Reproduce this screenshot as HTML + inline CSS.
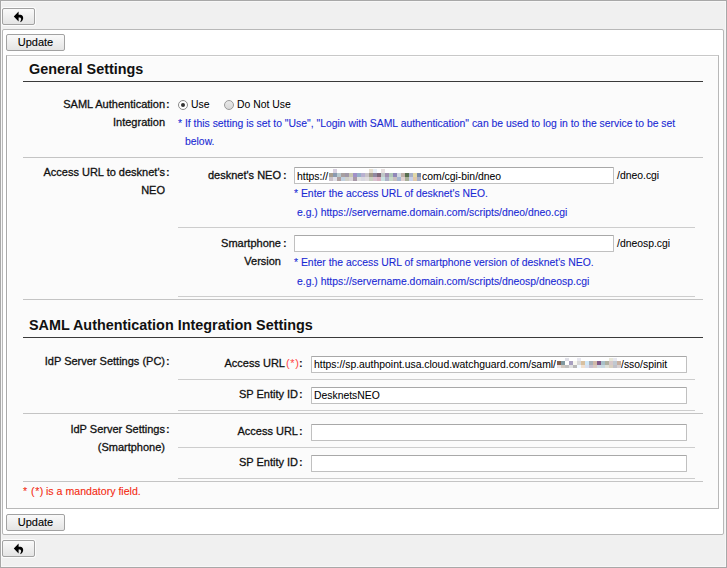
<!DOCTYPE html>
<html><head><meta charset="utf-8">
<style>
*{box-sizing:border-box}
html,body{margin:0;padding:0}
body{width:727px;height:568px;position:relative;overflow:hidden;background:#f0f0f0;font-family:"Liberation Sans",sans-serif;font-size:11px;color:#222}
.a{position:absolute}
.ln{position:absolute;height:1px;background:#c4c4c4}
.btn{position:absolute;border:1px solid #a2a2a2;border-radius:2px;background:linear-gradient(#fafafa,#e4e4e4);box-shadow:0 0 0 1px rgba(255,255,255,.8)}
.t{position:absolute;white-space:nowrap;line-height:13px;color:#111;-webkit-text-stroke-width:0.3px}
.r{text-align:right}
.blue{color:#1a2ad4!important;-webkit-text-stroke-width:0.1px!important;font-size:10.4px}
.s{font-size:10.4px;color:#000;-webkit-text-stroke-width:0.05px}
.red{font-size:10.6px!important;color:#f42a10!important;-webkit-text-stroke-width:0.1px!important}
.c{font-weight:bold;-webkit-text-stroke:0 !important}
.inp{position:absolute;border:1px solid #c0c0c0;border-top-color:#a8a8a8;border-radius:1px;background:#fff;height:17px}
.h{position:absolute;font-weight:bold;font-size:14.4px;color:#111;white-space:nowrap;line-height:16px}
.px{position:absolute;width:4px;height:4px}
</style></head><body>
<!-- outer frame -->
<div class="a" style="left:0;top:0;width:727px;height:1px;background:#a8a8a8"></div>
<div class="a" style="left:0;top:0;width:1px;height:568px;background:#a8a8a8"></div>
<div class="a" style="left:726px;top:0;width:1px;height:568px;background:#a8a8a8"></div>
<div class="a" style="left:1px;top:1px;width:725px;height:1px;background:#f7f7f7"></div>
<div class="a" style="left:1px;top:1px;width:1px;height:566px;background:#f7f7f7"></div>
<div class="a" style="left:725px;top:1px;width:1px;height:566px;background:#f7f7f7"></div>
<div class="a" style="left:1px;top:566px;width:725px;height:1px;background:#f7f7f7"></div>
<div class="a" style="left:0;top:567px;width:727px;height:1px;background:#a8a8a8"></div>

<!-- top back button -->
<div class="btn" style="left:2px;top:8px;width:33px;height:17px">
<svg width="31" height="15" style="position:absolute;left:0;top:0"><path d="M10.8 7.5 L15.6 2.6 L15.6 5.7 L17.6 5.7 C19.7 5.7 20.5 8 20.1 9.8 C19.8 11.2 18.9 12.5 17.6 13.3 L17.3 12.6 C17.9 11.6 18.3 10.6 18.1 9.8 C17.9 9 17.2 8.5 16.4 8.5 L15.6 8.5 L15.6 12.4 Z" fill="#000"/></svg>
</div>

<!-- panel -->
<div class="a" style="left:2px;top:29px;width:722px;height:506px;border:1px solid #b8b8b8;border-radius:2px;background:#fff"></div>

<div class="btn" style="left:6px;top:34px;width:59px;height:17px"><div class="t" style="left:0;width:57px;text-align:center;top:1px;color:#000;-webkit-text-stroke-width:0.1px">Update</div></div>

<!-- inner panel -->
<div class="a" style="left:6px;top:55px;width:713px;height:454px;border:1px solid #b8b8b8;border-top-color:#c8c8c8;border-left-color:#a8a8a8;background:#fbfbfb;box-shadow:inset 1px 1px 0 #fff"></div>

<!-- General Settings -->
<div class="h" style="left:29px;top:61px">General Settings</div>
<div class="ln" style="left:23px;top:81px;width:680px;background:#3a3a3a"></div>

<!-- Row 1 -->
<div class="t r" style="right:562px;top:98px">SAML Authentication</div>
<div class="t c" style="left:166px;top:98px">:</div>
<div class="t r" style="right:562px;top:116px">Integration</div>

<div class="a" style="left:178px;top:100px;width:10px;height:10px;border-radius:50%;border:1px solid #8a8a8a;background:#fff"><div class="a" style="left:2px;top:2px;width:4px;height:4px;border-radius:50%;background:#333"></div></div>
<div class="t s" style="left:191px;top:98px">Use</div>
<div class="a" style="left:224px;top:100px;width:10px;height:10px;border-radius:50%;border:1px solid #9a9a9a;background:linear-gradient(#e8e8e8,#d8d8d8)"></div>
<div class="t s" style="left:237px;top:98px">Do Not Use</div>
<div class="t blue" style="left:178px;top:117px">*&nbsp;If this setting is set to "Use", "Login with SAML authentication" can be used to log in to the service to be set</div>
<div class="t blue" style="left:185px;top:135px">below.</div>

<div class="ln" style="left:23px;top:157px;width:680px"></div>

<!-- Row 2 -->
<div class="t r" style="right:562px;top:166px">Access URL to desknet's</div>
<div class="t c" style="left:166px;top:166px">:</div>
<div class="t r" style="right:562px;top:184px">NEO</div>

<div class="t r" style="right:446px;top:169px">desknet's NEO</div>
<div class="t c" style="left:283px;top:169px">:</div>
<div class="inp" style="left:294px;top:167px;width:320px"></div>
<div class="t s" style="left:297px;top:170px">https://</div>
<div class="t s" style="left:422px;top:170px">com/cgi-bin/dneo</div>
<svg class="a" style="left:329px;top:169px;filter:blur(0.4px)" width="92" height="12"><rect x="0" y="4" width="4" height="4" fill="#a89e8e"/><rect x="4" y="4" width="4" height="4" fill="#8a9ab0"/><rect x="8" y="4" width="4" height="4" fill="#b8c8cc"/><rect x="12" y="4" width="4" height="4" fill="#a8a0a0"/><rect x="16" y="4" width="4" height="4" fill="#a098a8"/><rect x="20" y="4" width="4" height="4" fill="#c8c8b0"/><rect x="24" y="4" width="4" height="4" fill="#a090c8"/><rect x="28" y="4" width="4" height="4" fill="#98b0c8"/><rect x="32" y="4" width="4" height="4" fill="#b8b0d0"/><rect x="36" y="4" width="4" height="4" fill="#c8c4c8"/><rect x="40" y="4" width="4" height="4" fill="#a09888"/><rect x="44" y="4" width="4" height="4" fill="#9088a0"/><rect x="48" y="4" width="4" height="4" fill="#806878"/><rect x="52" y="4" width="4" height="4" fill="#c0c8c8"/><rect x="56" y="4" width="4" height="4" fill="#a090b0"/><rect x="60" y="4" width="4" height="4" fill="#b0c8b8"/><rect x="64" y="4" width="4" height="4" fill="#9088b8"/><rect x="68" y="4" width="4" height="4" fill="#d0d8e0"/><rect x="72" y="4" width="4" height="4" fill="#c0b0a8"/><rect x="76" y="4" width="4" height="4" fill="#587050"/><rect x="80" y="4" width="4" height="4" fill="#a8b0c8"/><rect x="84" y="4" width="4" height="4" fill="#e0d8a8"/><rect x="88" y="4" width="4" height="4" fill="#7888a8"/><rect x="0" y="8" width="4" height="4" fill="#c8c0c8"/><rect x="4" y="8" width="4" height="4" fill="#e0e0e8"/><rect x="8" y="8" width="4" height="4" fill="#b0a0a0"/><rect x="12" y="8" width="4" height="4" fill="#c0d0e0"/><rect x="16" y="8" width="4" height="4" fill="#d0d0c8"/><rect x="20" y="8" width="4" height="4" fill="#d8d4d8"/><rect x="24" y="8" width="4" height="4" fill="#a898a8"/><rect x="28" y="8" width="4" height="4" fill="#e0e0e0"/><rect x="32" y="8" width="4" height="4" fill="#d8d8e0"/><rect x="36" y="8" width="4" height="4" fill="#e0dce0"/><rect x="40" y="8" width="4" height="4" fill="#c8d0c0"/><rect x="44" y="8" width="4" height="4" fill="#d8c0d0"/><rect x="48" y="8" width="4" height="4" fill="#d8b0c0"/><rect x="52" y="8" width="4" height="4" fill="#c8e0e0"/><rect x="56" y="8" width="4" height="4" fill="#b0b0c8"/><rect x="60" y="8" width="4" height="4" fill="#c8d8c8"/><rect x="64" y="8" width="4" height="4" fill="#c8c0c0"/><rect x="68" y="8" width="4" height="4" fill="#a8b8d0"/><rect x="72" y="8" width="4" height="4" fill="#e0d0d0"/><rect x="76" y="8" width="4" height="4" fill="#a8b098"/><rect x="80" y="8" width="4" height="4" fill="#c8d0e8"/><rect x="84" y="8" width="4" height="4" fill="#e0c8a8"/><rect x="88" y="8" width="4" height="4" fill="#a8b0c8"/><rect x="40" y="0" width="4" height="4" fill="#e8e0d0"/><rect x="44" y="0" width="4" height="4" fill="#e8f0f8"/><rect x="52" y="0" width="4" height="4" fill="#e8e0e0"/><rect x="4" y="0" width="4" height="4" fill="#d8d0e0"/></svg>
<div class="t s" style="left:617px;top:169px">/dneo.cgi</div>
<div class="t blue" style="left:294px;top:187px">* Enter the access URL of desknet's NEO.</div>
<div class="t blue" style="left:297px;top:206px">e.g.) https://servername.domain.com/scripts/dneo/dneo.cgi</div>
<div class="ln" style="left:178px;top:227px;width:517px;background:#cdcdcd"></div>

<div class="t r" style="right:446px;top:237px">Smartphone</div>
<div class="t c" style="left:283px;top:237px">:</div>
<div class="t r" style="right:446px;top:255px">Version</div>
<div class="inp" style="left:294px;top:235px;width:320px"></div>
<div class="t s" style="left:617px;top:237px">/dneosp.cgi</div>
<div class="t blue" style="left:294px;top:256px">* Enter the access URL of smartphone version of desknet's NEO.</div>
<div class="t blue" style="left:297px;top:275px">e.g.) https://servername.domain.com/scripts/dneosp/dneosp.cgi</div>
<div class="ln" style="left:178px;top:296px;width:517px;background:#cdcdcd"></div>
<div class="ln" style="left:23px;top:299px;width:680px"></div>

<!-- SAML Authentication Integration Settings -->
<div class="h" style="left:29px;top:317px">SAML Authentication Integration Settings</div>
<div class="ln" style="left:23px;top:337px;width:680px;background:#3a3a3a"></div>

<div class="t r" style="right:562px;top:355px">IdP Server Settings (PC)</div>
<div class="t c" style="left:166px;top:355px">:</div>

<div class="t r" style="right:442px;top:357px">Access URL</div>
<div class="t" style="left:286px;top:357px;color:#f44;-webkit-text-stroke-width:0;letter-spacing:0.6px">(*)</div>
<div class="t c" style="left:299px;top:357px">:</div>
<div class="inp" style="left:311px;top:356px;width:376px"></div>
<div class="t s" style="left:314px;top:358px">https://sp.authpoint.usa.cloud.watchguard.com/saml/</div>
<div class="t s" style="left:621px;top:358px">/sso/spinit</div>
<svg class="a" style="left:557px;top:357px;filter:blur(0.4px)" width="64" height="11"><rect x="0" y="4" width="4" height="4" fill="#806050"/><rect x="4" y="4" width="4" height="4" fill="#8098a0"/><rect x="8" y="4" width="4" height="4" fill="#ffffff"/><rect x="12" y="4" width="4" height="4" fill="#a8a0c0"/><rect x="16" y="4" width="4" height="4" fill="#f8f8f0"/><rect x="20" y="4" width="4" height="4" fill="#d8d8d8"/><rect x="24" y="4" width="4" height="4" fill="#d8c0a0"/><rect x="28" y="4" width="4" height="4" fill="#d0e8f8"/><rect x="32" y="4" width="4" height="4" fill="#a8b0b8"/><rect x="36" y="4" width="4" height="4" fill="#d0b8a8"/><rect x="40" y="4" width="4" height="4" fill="#805888"/><rect x="44" y="4" width="4" height="4" fill="#a8c0c8"/><rect x="48" y="4" width="4" height="4" fill="#b0b0a0"/><rect x="52" y="4" width="4" height="4" fill="#d8c8c8"/><rect x="56" y="4" width="4" height="4" fill="#c0c8d0"/><rect x="60" y="4" width="4" height="4" fill="#c8b0a0"/><rect x="0" y="8" width="4" height="3" fill="#e8e0e0"/><rect x="4" y="8" width="4" height="3" fill="#d0c8c0"/><rect x="8" y="8" width="4" height="3" fill="#c0c0c0"/><rect x="12" y="8" width="4" height="3" fill="#e0e0e0"/><rect x="16" y="8" width="4" height="3" fill="#b8b8b8"/><rect x="20" y="8" width="4" height="3" fill="#f0f8ff"/><rect x="24" y="8" width="4" height="3" fill="#f0e0d0"/><rect x="28" y="8" width="4" height="3" fill="#d8e0f0"/><rect x="32" y="8" width="4" height="3" fill="#c8c0d0"/><rect x="36" y="8" width="4" height="3" fill="#d8c8c0"/><rect x="40" y="8" width="4" height="3" fill="#d0d8e0"/><rect x="44" y="8" width="4" height="3" fill="#c8d8e0"/><rect x="48" y="8" width="4" height="3" fill="#e0e0d8"/><rect x="52" y="8" width="4" height="3" fill="#d8d0c0"/><rect x="56" y="8" width="4" height="3" fill="#c0c0c8"/><rect x="60" y="8" width="4" height="3" fill="#d8d0d0"/><rect x="8" y="1" width="4" height="3" fill="#e0e0e8"/><rect x="20" y="1" width="4" height="3" fill="#e8e8f0"/><rect x="52" y="1" width="4" height="3" fill="#e8e8d8"/><rect x="56" y="1" width="4" height="3" fill="#e8e8f0"/></svg>
<div class="ln" style="left:178px;top:379px;width:517px;background:#cdcdcd"></div>

<div class="t r" style="right:429px;top:388px">SP Entity ID</div>
<div class="t c" style="left:299px;top:388px">:</div>
<div class="inp" style="left:311px;top:387px;width:376px"></div>
<div class="t s" style="left:314px;top:389px">DesknetsNEO</div>
<div class="ln" style="left:178px;top:410px;width:517px;background:#cdcdcd"></div>
<div class="ln" style="left:23px;top:413px;width:680px"></div>

<div class="t r" style="right:562px;top:423px">IdP Server Settings</div>
<div class="t c" style="left:166px;top:423px">:</div>
<div class="t r" style="right:562px;top:441px">(Smartphone)</div>

<div class="t r" style="right:429px;top:425px">Access URL</div>
<div class="t c" style="left:299px;top:425px">:</div>
<div class="inp" style="left:311px;top:424px;width:376px"></div>
<div class="ln" style="left:178px;top:447px;width:517px;background:#cdcdcd"></div>

<div class="t r" style="right:429px;top:456px">SP Entity ID</div>
<div class="t c" style="left:299px;top:456px">:</div>
<div class="inp" style="left:311px;top:455px;width:376px"></div>
<div class="ln" style="left:178px;top:478px;width:517px;background:#cdcdcd"></div>
<div class="ln" style="left:23px;top:481px;width:680px"></div>

<div class="t s red" style="left:23px;top:485px">*</div><div class="t s red" style="left:31px;top:485px;letter-spacing:0.6px">(*)</div><div class="t s red" style="left:46px;top:485px">is a mandatory field.</div>

<!-- bottom update -->
<div class="btn" style="left:6px;top:514px;width:59px;height:17px"><div class="t" style="left:0;width:57px;text-align:center;top:1px;color:#000;-webkit-text-stroke-width:0.1px">Update</div></div>

<!-- bottom back button -->
<div class="btn" style="left:2px;top:540px;width:33px;height:17px">
<svg width="31" height="15" style="position:absolute;left:0;top:0"><path d="M10.8 7.5 L15.6 2.6 L15.6 5.7 L17.6 5.7 C19.7 5.7 20.5 8 20.1 9.8 C19.8 11.2 18.9 12.5 17.6 13.3 L17.3 12.6 C17.9 11.6 18.3 10.6 18.1 9.8 C17.9 9 17.2 8.5 16.4 8.5 L15.6 8.5 L15.6 12.4 Z" fill="#000"/></svg>
</div>
</body></html>
